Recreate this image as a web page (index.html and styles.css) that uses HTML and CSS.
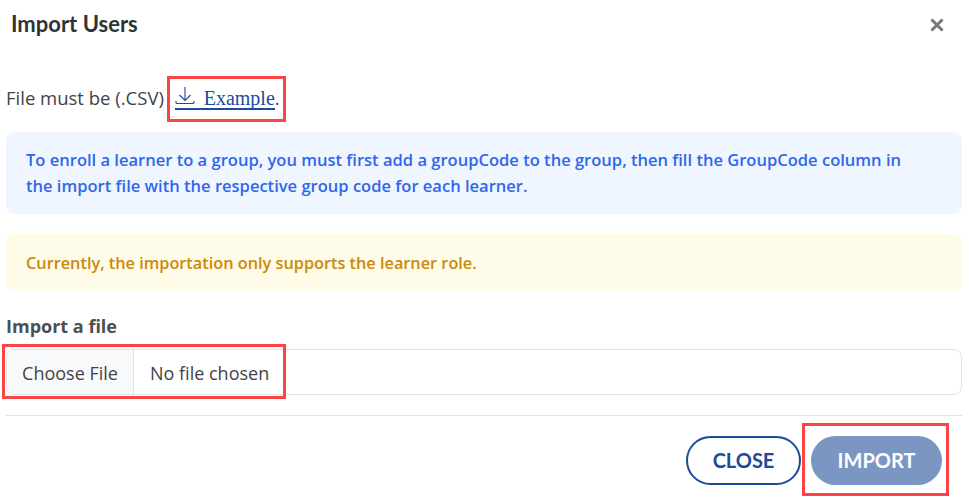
FILE: index.html
```html
<!DOCTYPE html>
<html lang="en">
<head>
  <meta charset="UTF-8" />
  <title>Import Users</title>
  <link rel="stylesheet" href="styles.css">
</head>
<body>
  <div class="modal">
    <div class="modal-header">
      <h2>Import Users</h2>
      <svg class="close-icon" width="16" height="16" viewBox="0 0 16 16">
        <path d="M2.5 2.5 L13.5 13.5 M13.5 2.5 L2.5 13.5" stroke="#777" stroke-width="3" fill="none"/>
      </svg>
    </div>

    <p class="file-note">File must be (.CSV) <a href="#" class="example-link"><svg class="download-icon" width="20" height="20" viewBox="0 0 20 20"><path d="M10 1 V14.5 M4.5 9 L10 14.5 L15.5 9 M1 15 V16.5 Q1 17.5 2 17.5 H18 Q19 17.5 19 16.5 V15" stroke="#1e4a9a" stroke-width="1.1" fill="none"/></svg> Example</a>.<span class="mark mark-link"></span></p>

    <div class="alert alert-blue">To enroll a learner to a group, you must first add a groupCode to the group, then fill the GroupCode column in the import file with the respective group code for each learner.</div>
    <div class="alert alert-yellow">Currently, the importation only supports the learner role.</div>

    <label class="field-label">Import a file</label>
    <div class="file-input">
      <span class="file-button">Choose File</span>
      <span class="file-name">No file chosen</span>
      <span class="mark mark-file"></span>
    </div>

    <div class="modal-footer">
      <button class="btn btn-close">CLOSE</button>
      <div class="import-wrap">
        <button class="btn btn-import">IMPORT</button>
        <span class="mark mark-import"></span>
      </div>
    </div>
  </div>
</body>
</html>
```

FILE: styles.css
```css
* {
  box-sizing: border-box;
}

body {
  margin: 0;
  background: #fff;
  color: #3f4347;
  font-family: 'Open Sans', 'Noto Sans', sans-serif;
}

.modal {
  min-height: 504px;
  padding: 0 7px 0 6px;
}

.modal-header {
  display: flex;
  justify-content: space-between;
  align-items: center;
  height: 49px;
  padding: 0 17px 0 5px;
}

h2 {
  margin: -3px 0 0;
  font-family: Lato, sans-serif;
  font-size: 22px;
  font-weight: 700;
  color: #2f3337;
}

.file-note {
  position: relative;
  margin: 35px 0 20px;
  height: 28px;
  line-height: 28px;
  font-size: 18.5px;
}

.example-link {
  display: inline-block;
  margin-left: 6px;
  font-family: 'Liberation Serif', serif;
  font-size: 20px;
  line-height: 19px;
  color: #1e4a9a;
  text-decoration: none;
  border-bottom: 2px solid #1e4a9a;
}

.download-icon {
  margin-right: 4px;
  vertical-align: -1px;
}

.alert {
  border-radius: 8px;
  padding: 0 20px;
  font-weight: 600;
  line-height: 26px;
}

.alert-blue {
  height: 82px;
  padding-top: 15px;
  padding-right: 34px;
  font-size: 16.55px;
  background: #eff6ff;
  color: #2f67ec;
}

.alert-yellow {
  height: 57px;
  margin-top: 20px;
  padding-top: 16px;
  font-size: 16.3px;
  background: #fefbe9;
  color: #ca8a0a;
}

.field-label {
  display: block;
  margin-top: 23px;
  height: 25px;
  line-height: 24px;
  font-size: 18px;
  font-weight: 700;
  color: #4b5055;
}

.file-input {
  position: relative;
  display: flex;
  height: 46px;
  margin-top: 10px;
  border: 1px solid #dfe2e6;
  border-radius: 8px;
  font-size: 18px;
  line-height: 46px;
}

.file-button {
  width: 127px;
  text-align: center;
  background: #f8f9fa;
  border-right: 1px solid #dfe2e6;
  border-radius: 8px 0 0 8px;
}

.file-name {
  padding-left: 16px;
}

.modal-footer {
  display: flex;
  justify-content: flex-end;
  gap: 10px;
  margin-top: 20px;
  padding: 20px 20px 0 0;
  border-top: 1px solid #e2e3e5;
}

.import-wrap {
  position: relative;
}

.btn {
  height: 49px;
  padding: 0 0 2px;
  border-radius: 25px;
  font-family: Lato, sans-serif;
  font-size: 20px;
  font-weight: 700;
}

.btn-close {
  width: 115px;
  background: #fff;
  border: 2px solid #1e4a9a;
  color: #1e4a9a;
}

.btn-import {
  width: 131px;
  background: #7b96c3;
  border: none;
  color: #fff;
}

/* red annotation boxes over the screenshot */
.mark {
  position: absolute;
  border: 3px solid #fb4444;
  pointer-events: none;
}

.mark-link {
  left: 161px;
  top: -8px;
  width: 119px;
  height: 46px;
}

.mark-file {
  left: -5px;
  top: -6px;
  width: 284px;
  height: 55px;
}

.mark-import {
  left: -9px;
  top: -13px;
  width: 147px;
  height: 73px;
}
```
